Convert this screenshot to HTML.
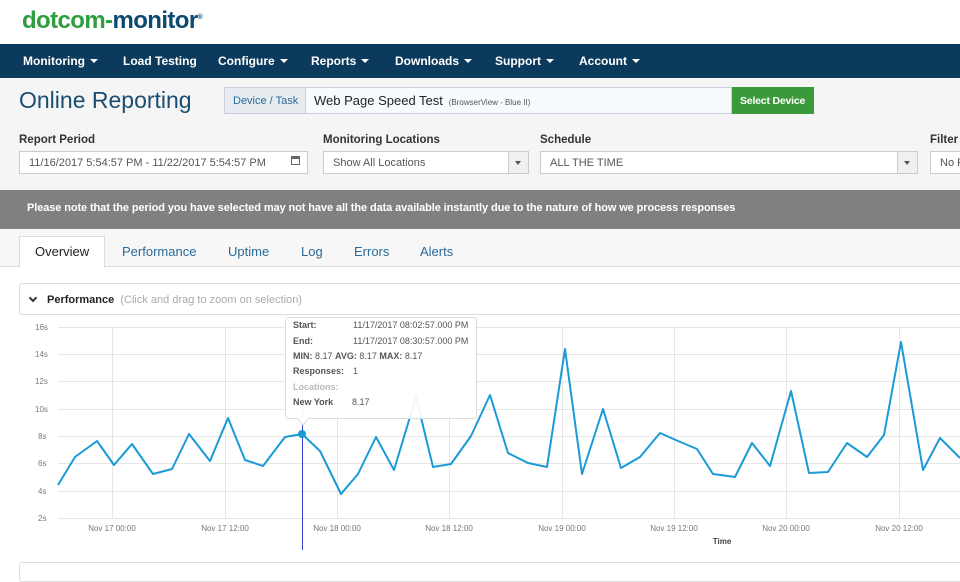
<!DOCTYPE html>
<html><head><meta charset="utf-8"><style>
*{margin:0;padding:0;box-sizing:border-box}
body{width:960px;height:569px;overflow:hidden;background:#fff;font-family:"Liberation Sans",sans-serif;position:relative}
.a{position:absolute}
.nav{top:44px;left:0;width:960px;height:34px;background:#0b3a5c}
.nav span{position:absolute;top:10px;color:#fff;font-size:12px;font-weight:bold}
.tri{display:inline-block;width:0;height:0;border-left:4px solid transparent;border-right:4px solid transparent;border-top:4px solid currentColor;margin-left:5px;vertical-align:2px}
.lbl{font-size:11.5px;font-weight:bold;color:#333}
.inp{background:#fff;border:1px solid #ccc;height:23px;font-size:11px;color:#555;padding:5px 0 0 9px}
.dd{position:absolute;right:0;top:0;width:20px;height:21px;background:#f0f0f0;border-left:1px solid #ccc;color:#555}
.dd:after{content:"";position:absolute;left:6px;top:9px;border-left:3px solid transparent;border-right:3px solid transparent;border-top:4px solid #555}
.tab{position:absolute;top:244px;font-size:13px;color:#2a6a9a}
</style></head><body>
<div class="a" style="top:0;left:0;width:960px;height:44px;background:#fff"></div>
<div class="a" style="left:22px;top:7px;font-size:24px;font-weight:bold;color:#2e9e3e;letter-spacing:-0.6px">dotcom-<span style="color:#0b4a70">monitor</span><sup style="font-size:7px;color:#0b4a70">®</sup></div>
<div class="a nav">
<span style="left:23px">Monitoring<i class="tri"></i></span>
<span style="left:123px">Load Testing</span>
<span style="left:218px">Configure<i class="tri"></i></span>
<span style="left:311px">Reports<i class="tri"></i></span>
<span style="left:395px">Downloads<i class="tri"></i></span>
<span style="left:495px">Support<i class="tri"></i></span>
<span style="left:579px">Account<i class="tri"></i></span>
</div>
<div class="a" style="top:78px;left:0;width:960px;height:112px;background:#f5f5f5"></div>
<div class="a" style="left:19px;top:87px;font-size:23px;color:#1b4d70">Online Reporting</div>
<div class="a" style="left:224px;top:87px;width:508px;height:27px;border:1px solid #ccd;background:#f8fbfd"></div>
<div class="a" style="left:225px;top:88px;width:81px;height:25px;background:#e6ecef;border-right:1px solid #ccd;font-size:11px;color:#2a6a9a;padding:7px 0 0 8px">Device / Task</div>
<div class="a" style="left:314px;top:93px;font-size:13px;color:#222">Web Page Speed Test <span style="font-size:8px;color:#555">&nbsp;(BrowserView - Blue II)</span></div>
<div class="a" style="left:732px;top:87px;width:82px;height:27px;background:#3a9a3a;color:#fff;font-size:10.5px;font-weight:bold;padding:8px 0 0 8px;letter-spacing:-0.2px">Select Device</div>
<div class="a lbl" style="left:19px;top:134px">Report Period</div>
<div class="a inp" style="left:19px;top:151px;width:289px">11/16/2017 5:54:57 PM - 11/22/2017 5:54:57 PM<span style="position:absolute;right:7px;top:4px;width:9px;height:9px;border:1px solid #666;border-top-width:3px"></span></div>
<div class="a lbl" style="left:323px;top:134px">Monitoring Locations</div>
<div class="a inp" style="left:323px;top:151px;width:206px">Show All Locations<div class="dd"></div></div>
<div class="a lbl" style="left:540px;top:134px">Schedule</div>
<div class="a inp" style="left:540px;top:151px;width:378px">ALL THE TIME<div class="dd"></div></div>
<div class="a lbl" style="left:930px;top:134px">Filter</div>
<div class="a inp" style="left:930px;top:151px;width:40px">No F</div>
<div class="a" style="top:190px;left:0;width:960px;height:39px;background:#808080;color:#fff;font-size:11px;font-weight:bold;padding:12px 0 0 27px;letter-spacing:-0.1px">Please note that the period you have selected may not have all the data available instantly due to the nature of how we process responses</div>
<div class="a" style="top:229px;left:0;width:960px;height:38px;background:#f7f7f7;border-bottom:1px solid #ddd"></div>
<div class="a" style="top:236px;left:19px;width:86px;height:32px;background:#fff;border:1px solid #ddd;border-bottom:none"></div>
<div class="tab" style="left:35px;color:#222">Overview</div>
<div class="tab" style="left:122px">Performance</div>
<div class="tab" style="left:228px">Uptime</div>
<div class="tab" style="left:301px">Log</div>
<div class="tab" style="left:354px">Errors</div>
<div class="tab" style="left:420px">Alerts</div>
<div class="a" style="top:283px;left:19px;width:960px;height:32px;border:1px solid #ddd;border-radius:3px;background:#fff;font-size:11px;padding:10px 0 0 27px"><b style="color:#222">Performance</b> <span style="color:#aaa">&nbsp;(Click and drag to zoom on selection)</span></div>
<div class="a" style="left:30px;top:295px;width:6px;height:6px;border-right:2px solid #333;border-bottom:2px solid #333;transform:rotate(45deg)"></div>
<div class="a" style="top:562px;left:19px;width:960px;height:20px;border:1px solid #ddd;border-radius:3px"></div>
<svg class="a" style="left:0;top:315px" width="960" height="245" viewBox="0 315 960 245">
<g stroke="#e6e6e6" stroke-width="1">
<line x1="58" y1="327.5" x2="960" y2="327.5"/><line x1="58" y1="354.5" x2="960" y2="354.5"/><line x1="58" y1="381.5" x2="960" y2="381.5"/><line x1="58" y1="409.5" x2="960" y2="409.5"/><line x1="58" y1="436.5" x2="960" y2="436.5"/><line x1="58" y1="463.5" x2="960" y2="463.5"/><line x1="58" y1="491.5" x2="960" y2="491.5"/><line x1="58" y1="518.5" x2="960" y2="518.5"/>
<line x1="112.5" y1="327" x2="112.5" y2="518"/><line x1="225.5" y1="327" x2="225.5" y2="518"/><line x1="337.5" y1="327" x2="337.5" y2="518"/><line x1="449.5" y1="327" x2="449.5" y2="518"/><line x1="562.5" y1="327" x2="562.5" y2="518"/><line x1="674.5" y1="327" x2="674.5" y2="518"/><line x1="786.5" y1="327" x2="786.5" y2="518"/><line x1="899.5" y1="327" x2="899.5" y2="518"/>
</g>
<g font-size="8" fill="#777" font-family="Liberation Sans">
<text x="35" y="330">16s</text><text x="35" y="357">14s</text><text x="35" y="384">12s</text><text x="35" y="412">10s</text><text x="38" y="439">8s</text><text x="38" y="466">6s</text><text x="38" y="494">4s</text><text x="38" y="521">2s</text>
<g text-anchor="middle"><text x="112" y="531">Nov 17 00:00</text><text x="225" y="531">Nov 17 12:00</text><text x="337" y="531">Nov 18 00:00</text><text x="449" y="531">Nov 18 12:00</text><text x="562" y="531">Nov 19 00:00</text><text x="674" y="531">Nov 19 12:00</text><text x="786" y="531">Nov 20 00:00</text><text x="899" y="531">Nov 20 12:00</text>
<text x="722" y="544" font-weight="bold" fill="#444">Time</text></g>
</g>
<line x1="302.5" y1="380" x2="302.5" y2="550" stroke="#3344cc" stroke-width="1"/>
<polyline fill="none" stroke="#1a9ad6" stroke-width="2" stroke-linejoin="round" points="58,485 75,457 97,441 114,465 132,444 153,474 172,469 189,434 210,461 228,418 245,460 263,466 285,437 302,434 320,451 341,494 358,474 376,437 394,470 416,397 433,467 451,464 471,436 490,395 508,453 528,463 547,467 565,349 582,474 603,409 621,468 640,457 660,433 678,441 697,449 713,474 735,477 752,443 770,466 791,391 809,473 828,472 847,443 867,457 884,435 901,342 923,470 940,438 960,458"/>
<circle cx="302" cy="434" r="4" fill="#1a9ad6"/>
<rect x="285.5" y="317.5" width="191" height="101" rx="3" fill="#fff" fill-opacity="0.93" stroke="#ddd"/>
<path d="M297 418 L303 425 L309 418" fill="#fff" stroke="#ddd"/>
<g font-size="9" fill="#555" font-family="Liberation Sans">
<text x="293" y="328" font-weight="bold">Start:</text><text x="353" y="328">11/17/2017 08:02:57.000 PM</text>
<text x="293" y="344" font-weight="bold">End:</text><text x="353" y="344">11/17/2017 08:30:57.000 PM</text>
<text x="293" y="359"><tspan font-weight="bold">MIN:</tspan> 8.17 <tspan font-weight="bold">AVG:</tspan> 8.17 <tspan font-weight="bold">MAX:</tspan> 8.17</text>
<text x="293" y="374" font-weight="bold">Responses:</text><text x="353" y="374">1</text>
<text x="293" y="390" font-weight="bold" fill="#bbb">Locations:</text>
<text x="293" y="405" font-weight="bold">New York</text><text x="352" y="405">8.17</text>
</g>
</svg>
</body></html>
